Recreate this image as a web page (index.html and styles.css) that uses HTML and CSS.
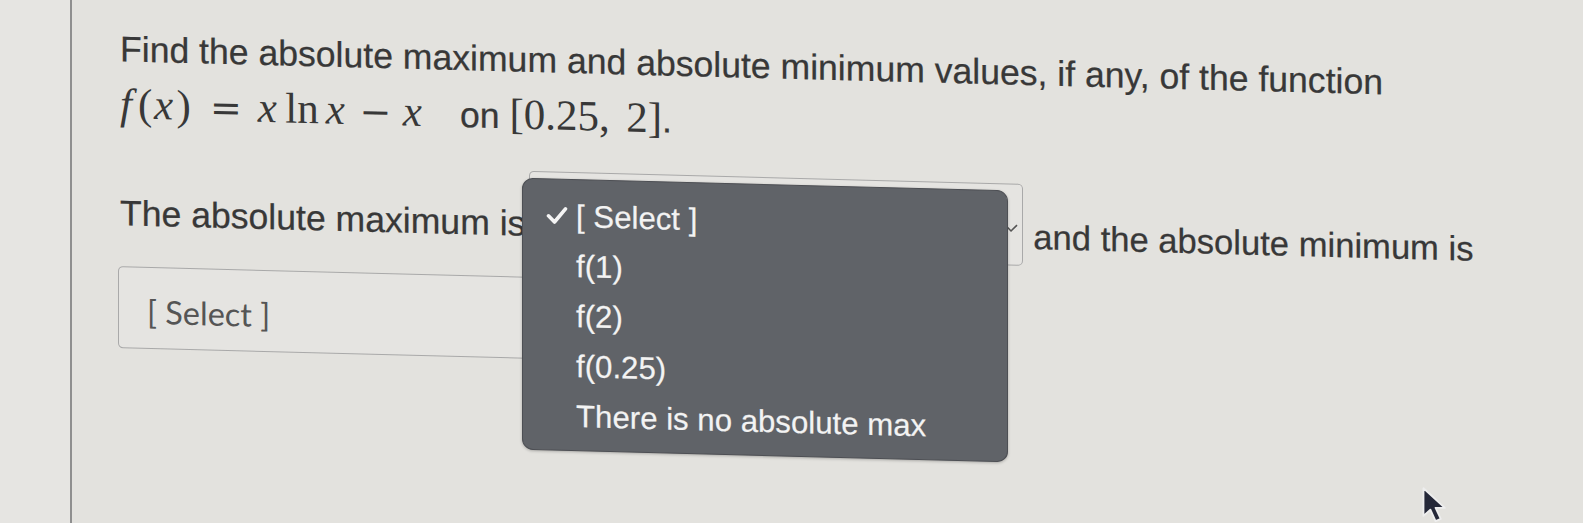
FILE: index.html
```html
<!DOCTYPE html>
<html lang="en">
<head>
<meta charset="utf-8">
<title>Quiz question</title>
<link rel="stylesheet" href="styles.css">
</head>
<body>
<div class="sidebar"></div>
<main class="page">
  <div class="content">
    <p class="question">Find the absolute maximum and absolute minimum values, if any, of the function <span class="math"><i class="mf">f</i><span class="mr">(</span><i class="mx">x</i><span class="mr">)</span><span class="rel">=</span><i class="mx2">x</i><span class="op">ln</span><i class="mx">x</i><span class="bin">−</span><i class="mx last">x</i></span> on <span class="math"><span class="mr">[0.25,</span><span class="mr sp">2]</span></span>.</p>
    <div class="answer">
      <span class="label">The absolute maximum is</span>
      <div class="select">
        <span class="sel-text">[ Select ]</span>
        <svg class="chev" width="14" height="9" viewBox="0 0 14 9"><path d="M1 1.5 L7 7.5 L13 1.5" fill="none" stroke="#555" stroke-width="1.6"/></svg>
      </div>
      <span class="label label2">and the absolute minimum is</span>
      <div class="select select2">
        <span class="sel-text">[ Select ]</span>
        <svg class="chev" width="14" height="9" viewBox="0 0 14 9"><path d="M1 1.5 L7 7.5 L13 1.5" fill="none" stroke="#555" stroke-width="1.6"/></svg>
      </div>
      <ul class="menu">
        <li class="item checked"><svg class="check" width="22" height="20" viewBox="0 0 22 20"><path d="M2.5 10.5 L8.5 16.5 L19.5 3" fill="none" stroke="#f4f4f4" stroke-width="3.6" stroke-linecap="round" stroke-linejoin="round"/></svg>[ Select ]</li>
        <li class="item">f(1)</li>
        <li class="item">f(2)</li>
        <li class="item">f(0.25)</li>
        <li class="item">There is no absolute max</li>
      </ul>
    </div>
  </div>
</main>
<svg class="cursor" width="28" height="38" viewBox="0 0 24 33"><path d="M2 2 L2 26 L8 20.5 L12.5 30.5 L17 28.5 L12.5 19 L20.5 19 Z" fill="#252838" stroke="#eeeeee" stroke-width="1.6" stroke-linejoin="round"/></svg>
</body>
</html>
```
FILE: styles.css
```css
html, body {
  margin: 0;
  height: 100%;
}
body {
  background: #e3e2de;
  font-family: "Liberation Sans", Arial, sans-serif;
  color: #383838;
  display: flex;
  overflow: hidden;
  position: relative;
}
.sidebar {
  flex: none;
  width: 70px;
  background: #e6e5e2;
  border-right: 2px solid #8f8f8f;
}
.page {
  flex: 1;
  position: relative;
}
.content {
  transform: skewY(1.5deg);
  transform-origin: -72px 0;
  padding: 18px 0 0 48px;
  -webkit-text-stroke: 0.25px currentColor;
}
.question {
  margin: 0;
  width: 1330px;
  font-size: 35.6px;
  line-height: 57px;
}
.math {
  font-family: "Liberation Serif", "Times New Roman", serif;
  font-size: 43px;
  line-height: 1;
  white-space: nowrap;
  -webkit-text-stroke: 0;
}
.math i {
  font-style: italic;
}
.mr {
  font-style: normal;
}
.mf {
  margin-right: 0.14em;
}
.mx {
  margin: 0 0.08em 0 0.04em;
}
.mx2 {
  margin-right: 0.2em;
}
.last {
  margin-right: 0.66em;
}
.rel, .bin {
  font-family: "DejaVu Serif", serif;
  font-size: 38px;
  font-weight: 300;
}
.rel {
  margin: 0 0.42em 0 0.5em;
}
.op {
  margin: 0 0.12em 0 0;
}
.bin {
  margin: 0 0.25em 0 0.3em;
}
.sp {
  margin-left: 0.38em;
}
.answer {
  margin-top: 25px;
  width: 1400px;
  display: flex;
  flex-wrap: wrap;
  align-items: flex-start;
  row-gap: 24px;
  position: relative;
}
.label {
  font-size: 35.6px;
  line-height: 40px;
  margin-top: 33px;
  margin-right: 4px;
}
.label2 {
  font-size: 34.6px;
  margin-left: 10px;
}
.select {
  box-sizing: border-box;
  width: 494px;
  height: 82px;
  border: 1px solid #a9a9a9;
  border-radius: 5px;
  background: #e5e4e1;
  padding: 25px 4px 0 28px;
  display: flex;
  align-items: flex-start;
  justify-content: space-between;
  font-family: Lato, "Open Sans", sans-serif;
  font-size: 32.5px;
  line-height: 38px;
  color: #555;
  -webkit-text-stroke: 0;
}
.select2 {
  margin-left: -2px;
}
.chev {
  margin-top: 14px;
}
.menu {
  position: absolute;
  top: 7px;
  left: 402px;
  width: 486px;
  height: 272px;
  box-sizing: border-box;
  margin: 0;
  padding: 12px 0 0 0;
  list-style: none;
  background: #606368;
  border: 1px solid #4d4f54;
  border-radius: 11px;
  box-shadow: 0 1px 3px rgba(0, 0, 0, 0.25);
  -webkit-text-stroke: 0.2px #f3f3f3;
}
.item {
  position: relative;
  height: 50px;
  line-height: 50px;
  padding-left: 53px;
  font-size: 31.2px;
  color: #f3f3f3;
}
.check {
  position: absolute;
  left: 23px;
  top: 14px;
}
.cursor {
  position: absolute;
  left: 1421px;
  top: 486px;
}
```
